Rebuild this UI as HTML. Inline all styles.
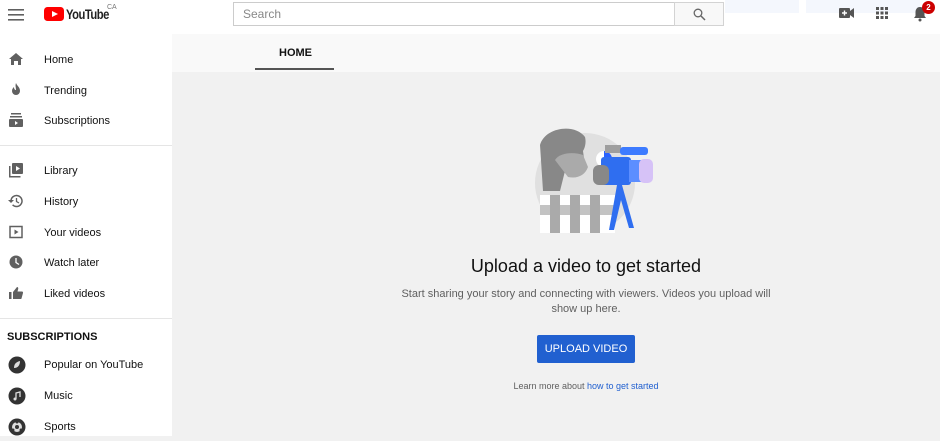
<!DOCTYPE html>
<html><head><meta charset="utf-8"><style>
*{margin:0;padding:0;box-sizing:border-box}
body{width:940px;height:436px;overflow:hidden;font-family:"Liberation Sans",Arial,sans-serif;background:#f1f1f1;position:relative;color:#0d0d0d}
.hdr{position:absolute;left:0;top:0;width:940px;height:34px;background:#fff}
.side{position:absolute;left:0;top:34px;width:172px;height:402px;background:#fff}
.tabs{position:absolute;left:172px;top:34px;width:768px;height:38px;background:#f9f9f9}
.item{position:absolute;left:0;width:172px;height:30px;font-size:11px;color:#111}
.item span{position:absolute;left:44px;top:10px}
.item svg{position:absolute;left:8px;top:7px}
.sep{position:absolute;left:0;width:172px;height:1px;background:#e5e5e5}
</style></head><body>
<div class="hdr">
 <svg style="position:absolute;left:8px;top:8px" width="16" height="14"><rect x="0" y="1" width="16" height="1.6" fill="#606060"/><rect x="0" y="6" width="16" height="1.6" fill="#606060"/><rect x="0" y="11" width="16" height="1.6" fill="#606060"/></svg>
 <svg style="position:absolute;left:44px;top:7px" width="22" height="14"><rect width="20" height="14" rx="3.5" fill="#f00"/><path d="M8 4l6 3-6 3z" fill="#fff"/></svg>
 <span style="position:absolute;left:66px;top:6px;font-size:14px;font-weight:bold;letter-spacing:-0.6px;color:#222;transform:scaleX(.8);transform-origin:left">YouTube</span>
 <span style="position:absolute;left:107px;top:4px;font-size:7px;color:#777">CA</span>
 <div style="position:absolute;left:233px;top:2px;width:442px;height:24px;border:1px solid #ccc;background:#fff"><span style="position:absolute;left:9px;top:4px;font-size:12px;color:#888">Search</span></div>
 <div style="position:absolute;left:674px;top:2px;width:50px;height:24px;border:1px solid #d3d3d3;background:#f8f8f8"><svg style="position:absolute;left:18px;top:5px" width="13" height="13"><circle cx="5" cy="5" r="3.8" stroke="#666" stroke-width="1.3" fill="none"/><path d="M8 8l4 4" stroke="#666" stroke-width="1.5"/></svg></div>
 <div style="position:absolute;left:725px;top:0;width:74px;height:13px;background:#f4f7fd"></div>
 <div style="position:absolute;left:806px;top:0;width:114px;height:13px;background:#f4f7fd"></div>
 <svg style="position:absolute;left:839px;top:7px" width="16" height="12"><rect x="0" y="1" width="11" height="10" rx="1" fill="#555"/><path d="M11 4l4-3v10l-4-3z" fill="#555"/><path d="M5.5 3.5v5M3 6h5" stroke="#fff" stroke-width="1.4"/></svg>
 <svg style="position:absolute;left:876px;top:7px" width="12" height="12" fill="#555"><rect x="0" y="0" width="3" height="3"/><rect x="4.5" y="0" width="3" height="3"/><rect x="9" y="0" width="3" height="3"/><rect x="0" y="4.5" width="3" height="3"/><rect x="4.5" y="4.5" width="3" height="3"/><rect x="9" y="4.5" width="3" height="3"/><rect x="0" y="9" width="3" height="3"/><rect x="4.5" y="9" width="3" height="3"/><rect x="9" y="9" width="3" height="3"/></svg>
 <svg style="position:absolute;left:913px;top:6px" width="14" height="16" fill="#555"><path d="M7 1c-3 0-4.5 2.5-4.5 5v4L1 12h12l-1.5-2V6C11.5 3.5 10 1 7 1z"/><circle cx="7" cy="14" r="1.5"/></svg>
 <div style="position:absolute;left:922px;top:1px;width:13px;height:13px;border-radius:50%;background:#c00;color:#fff;font-size:8px;font-weight:bold;text-align:center;line-height:13px">2</div>
</div>
<div class="side">
 <div class="item" style="top:10px"><svg width="16" height="16" fill="#606060"><path d="M8 2l7 6h-2v6H10v-4H6v4H3V8H1z"/></svg><span>Home</span></div>
 <div class="item" style="top:41px"><svg width="16" height="16" fill="#606060"><path d="M8 1c1 3 4 4 4 8a4 4 0 0 1-8 0c0-2 1-3 2-4 0 2 1 3 2 3 0-3-1-4 0-7z"/></svg><span>Trending</span></div>
 <div class="item" style="top:71px"><svg width="16" height="16" fill="#606060"><rect x="3" y="1" width="10" height="1.5"/><rect x="2" y="4" width="12" height="1.5"/><rect x="1" y="7" width="14" height="8" rx="1"/><path d="M7 9l3 2-3 2z" fill="#fff"/></svg><span>Subscriptions</span></div>
 <div class="sep" style="top:111px"></div>
 <div class="item" style="top:121px"><svg width="16" height="16" fill="#606060"><path d="M1 4h1.5v10h10V15.5H1z"/><rect x="4" y="1" width="11" height="11" rx="1"/><path d="M8 4l4 2.5L8 9z" fill="#fff"/></svg><span>Library</span></div>
 <div class="item" style="top:152px"><svg width="16" height="16"><path d="M3 8a5.5 5.5 0 1 1 1.6 3.9" stroke="#606060" stroke-width="1.5" fill="none"/><path d="M0 7h6L3 10z" fill="#606060"/><path d="M8.5 5v3.5l2.5 1.5" stroke="#606060" stroke-width="1.3" fill="none"/></svg><span>History</span></div>
 <div class="item" style="top:183px"><svg width="16" height="16"><rect x="2" y="2.5" width="12" height="11" stroke="#606060" stroke-width="1.5" fill="none"/><path d="M6.5 5.5l4 2.5-4 2.5z" fill="#606060"/></svg><span>Your videos</span></div>
 <div class="item" style="top:213px"><svg width="16" height="16"><circle cx="8" cy="8" r="6.5" fill="#606060"/><path d="M8 4v4.5l3 2" stroke="#fff" stroke-width="1.3" fill="none"/></svg><span>Watch later</span></div>
 <div class="item" style="top:244px"><svg width="16" height="16" fill="#606060"><rect x="1" y="7" width="2.5" height="7"/><path d="M5 7l4-5c1 0 1.5 1 1.2 2L9.5 6.5H14c.8 0 1.2.8 1 1.5l-1.5 5.5c-.2.5-.6.5-1 .5H5z"/></svg><span>Liked videos</span></div>
 <div class="sep" style="top:284px"></div>
 <div style="position:absolute;left:7px;top:297px;font-size:11px;font-weight:bold;color:#111">SUBSCRIPTIONS</div>
 <div class="item" style="top:315px"><svg width="18" height="18"><circle cx="9" cy="9" r="8.5" fill="#333"/><path d="M6 12c0-4 2-6 6-7 0 4-2 7-6 7z" fill="#ddd"/></svg><span>Popular on YouTube</span></div>
 <div class="item" style="top:346px"><svg width="18" height="18"><circle cx="9" cy="9" r="8.5" fill="#333"/><path d="M8 12V6l4-1v5" stroke="#ddd" stroke-width="1.3" fill="none"/><circle cx="7" cy="12" r="1.5" fill="#ddd"/></svg><span>Music</span></div>
 <div class="item" style="top:377px"><svg width="18" height="18"><circle cx="9" cy="9" r="8.5" fill="#333"/><circle cx="9" cy="9" r="5" fill="#ddd"/><circle cx="9" cy="9" r="2" fill="#333"/><circle cx="9" cy="4" r="1.5" fill="#333"/><circle cx="5" cy="12" r="1.5" fill="#333"/><circle cx="13" cy="12" r="1.5" fill="#333"/></svg><span>Sports</span></div>
</div>
<div class="tabs">
 <div style="position:absolute;left:107px;top:13px;font-size:11px;font-weight:bold;color:#111">HOME</div>
 <div style="position:absolute;left:83px;top:34px;width:79px;height:2px;background:#555"></div>
</div>
<svg style="position:absolute;left:535px;top:125px" width="125" height="112">
 <circle cx="50" cy="58" r="50" fill="#e0e0e0"/>
 <rect x="5" y="70" width="75" height="38" fill="#fff"/>
 <g fill="#aaa"><rect x="15" y="70" width="10" height="38"/><rect x="35" y="70" width="10" height="38"/><rect x="55" y="70" width="10" height="38"/><rect x="5" y="80" width="75" height="10" opacity=".7"/></g>
 <path d="M5 20c5-18 35-22 45-8 2 8-2 14-2 14l2 15c-5 10-15 10-20 5l-5 20H8z" fill="#888"/>
 <path d="M20 35c5-8 20-8 28-5l5 12c-3 8-10 12-20 10z" fill="#aaa"/>
 <circle cx="69" cy="34" r="8" fill="#fff"/><path d="M69 26a8 8 0 0 1 0 16z" fill="#2962ff"/>
 <rect x="70" y="20" width="16" height="8" fill="#9e9e9e"/>
 <rect x="85" y="22" width="28" height="8" rx="3" fill="#3d7bff"/>
 <rect x="66" y="32" width="30" height="28" rx="3" fill="#2f6ef0"/>
 <rect x="94" y="35" width="14" height="22" fill="#5c8eff"/>
 <rect x="104" y="34" width="14" height="24" rx="5" fill="#d6c2f7"/>
 <rect x="58" y="40" width="16" height="20" rx="6" fill="#888"/>
 <path d="M82 60l-8 45h5l7-30 8 28h5l-12-43z" fill="#2f6ef0"/>
</svg>
<div style="position:absolute;left:386px;top:256px;width:400px;text-align:center;font-size:18px;color:#111">Upload a video to get started</div>
<div style="position:absolute;left:400px;top:287px;width:372px;text-align:center;font-size:11px;line-height:15px;color:#606060">Start sharing your story and connecting with viewers. Videos you upload will show up here.</div>
<div style="position:absolute;left:537px;top:335px;width:98px;height:28px;background:#2160d0;border-radius:2px;color:#fff;font-size:11px;text-align:center;line-height:28px">UPLOAD VIDEO</div>
<div style="position:absolute;left:400px;top:381px;width:372px;text-align:center;font-size:9px;color:#606060">Learn more about <span style="color:#2160d0">how to get started</span></div>
</body></html>
